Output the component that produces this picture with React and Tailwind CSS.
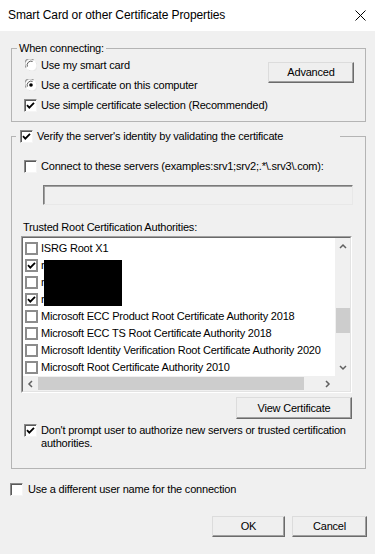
const items = [
  { label: 'ISRG Root X1', checked: false },
  { label: 'r', checked: true },
  { label: 'r', checked: false },
  { label: 'r', checked: true },
  { label: 'Microsoft ECC Product Root Certificate Authority 2018', checked: false },
  { label: 'Microsoft ECC TS Root Certificate Authority 2018', checked: false },
  { label: 'Microsoft Identity Verification Root Certificate Authority 2020', checked: false },
  { label: 'Microsoft Root Certificate Authority 2010', checked: false },
]

function Radio({ checked }) {
  return (
    <svg width="12" height="12" viewBox="0 0 12 12" className="shrink-0">
      <circle cx="6" cy="6" r="5.5" fill="#fff" />
      <path d="M1.2 8.5 A5 5 0 0 1 8.5 1.2" fill="none" stroke="#9a9a9a" strokeWidth="1.2" />
      <path d="M2.4 7.6 A4 4 0 0 1 7.6 2.4" fill="none" stroke="#5a5a5a" strokeWidth="1" />
      <path d="M10.8 3.5 A5 5 0 0 1 3.5 10.8" fill="none" stroke="#e6e6e6" strokeWidth="1" />
      {checked && <circle cx="6" cy="6" r="1.8" fill="#000" />}
    </svg>
  )
}

function Tick() {
  return (
    <svg width="9" height="9" viewBox="0 0 9 9" className="block">
      <path d="M1 4.2 L3.3 6.6 L8 1.8" fill="none" stroke="#000" strokeWidth="1.8" />
    </svg>
  )
}

function Check({ checked }) {
  return (
    <div className="w-[13px] h-[13px] shrink-0 bg-white border border-t-[#8a8a8a] border-l-[#8a8a8a] border-b-[#f5f5f5] border-r-[#f5f5f5] shadow-[inset_1px_1px_0_#5a5a5a] flex items-center justify-center">
      {checked && <Tick />}
    </div>
  )
}

function ListCheck({ checked }) {
  return (
    <div className="w-[13px] h-[13px] shrink-0 bg-white border-2 border-[#8c8c8c] flex items-center justify-center">
      {checked && <Tick />}
    </div>
  )
}

function Btn({ children, className }) {
  return (
    <button className={`h-[21px] bg-[#efefef] border border-t-[#dcdcdc] border-l-[#dcdcdc] border-b-[#6b6b6b] border-r-[#6b6b6b] shadow-[inset_-1px_-1px_0_#a0a0a0] flex items-center justify-center shrink-0 ${className}`}>
      {children}
    </button>
  )
}

function Chevron({ dir }) {
  const paths = {
    up: 'M1 5 L4 2 L7 5',
    down: 'M1 2 L4 5 L7 2',
    left: 'M5 1 L2 4 L5 7',
    right: 'M2 1 L5 4 L2 7',
  }
  return (
    <svg width="8" height="8" viewBox="0 0 8 8">
      <path d={paths[dir]} fill="none" stroke="#606060" strokeWidth="1.5" />
    </svg>
  )
}

export default function App() {
  return (
    <div className="w-[375px] h-[554px] bg-[#f0f0f0] text-black text-[11px] leading-[13px] tracking-[-0.2px] font-['Liberation_Sans',Arial,sans-serif] overflow-hidden">
      {/* Title bar */}
      <div className="h-[31px] bg-white flex items-center justify-between pl-[8px] pr-[9px]">
        <span className="text-[12px] tracking-[-0.1px]">Smart Card or other Certificate Properties</span>
        <svg width="11" height="11" viewBox="0 0 11 11">
          <path d="M0.5 0.5 L10.5 10.5 M10.5 0.5 L0.5 10.5" stroke="#000" strokeWidth="1" />
        </svg>
      </div>

      <div className="pl-[11px] pr-[9px]">
        {/* When connecting */}
        <fieldset className="mt-[10px] border border-[#b4b4b4]">
          <legend className="ml-[5px] px-[2px] leading-[14px]">When connecting:</legend>
          <div className="flex justify-between pl-[13px] pr-[11px] pb-[6px]">
            <div>
              <div className="h-[20px] flex items-center gap-[4px]">
                <Radio />
                <span>Use my smart card</span>
              </div>
              <div className="h-[20px] flex items-center gap-[4px]">
                <Radio checked />
                <span>Use a certificate on this computer</span>
              </div>
              <div className="h-[20px] flex items-center gap-[3px] -ml-[1px]">
                <Check checked />
                <span className="ml-[1px]">Use simple certificate selection (Recommended)</span>
              </div>
            </div>
            <Btn className="mt-[7px] w-[86px]">Advanced</Btn>
          </div>
        </fieldset>

        {/* Verify server */}
        <fieldset className="mt-[7px] border border-[#b4b4b4] pb-[18px]">
          <legend className="ml-[4px] w-[324px] pl-[4px] h-[14px] flex items-center gap-[4px]">
            <Check checked />
            <span>Verify the server's identity by validating the certificate</span>
          </legend>

          <div className="mt-[15px] ml-[12px] h-[16px] flex items-center gap-[4px]">
            <Check />
            <span>Connect to these servers (examples:srv1;srv2;.*\.srv3\.com):</span>
          </div>

          <div className="mt-[11px] ml-[31px] w-[310px] h-[20px] bg-[#f0f0f0] border border-t-[#7a7a7a] border-l-[#7a7a7a] border-b-[#e8e8e8] border-r-[#e8e8e8] shadow-[inset_1px_1px_0_#a0a0a0]" />

          <div className="mt-[15px] ml-[11px] h-[14px] leading-[14px]">Trusted Root Certification Authorities:</div>

          {/* List */}
          <div className="mt-[2px] ml-[9px] w-[331px] h-[157px] border border-t-[#a0a0a0] border-l-[#a0a0a0] border-b-[#ffffff] border-r-[#ffffff]">
            <div className="w-full h-full border border-t-[#696969] border-l-[#696969] border-b-[#e3e3e3] border-r-[#e3e3e3] flex flex-col bg-white">
              <div className="flex h-[138px]">
                <div className="relative flex-1 pt-[2px] overflow-hidden">
                  {items.map((it, i) => (
                    <div key={i} className="h-[17px] flex items-center gap-[3px] pl-[2px] whitespace-nowrap">
                      <ListCheck checked={it.checked} />
                      <span>{it.label}</span>
                    </div>
                  ))}
                  <div className="absolute left-[21px] top-[22px] w-[78px] h-[46px] bg-black" />
                </div>
                <div className="w-[15px] bg-[#f0f0f0] flex flex-col">
                  <div className="h-[17px] flex items-center justify-center"><Chevron dir="up" /></div>
                  <div className="flex-1 relative">
                    <div className="absolute left-[1px] right-[0px] top-[53px] h-[25px] bg-[#cdcdcd]" />
                  </div>
                  <div className="h-[17px] flex items-center justify-center"><Chevron dir="down" /></div>
                </div>
              </div>
              <div className="flex h-[15px] bg-[#f0f0f0]">
                <div className="w-[15px] flex items-center justify-center"><Chevron dir="left" /></div>
                <div className="w-[266px] bg-[#cdcdcd] my-[1px]" />
                <div className="flex-1" />
                <div className="w-[15px] flex items-center justify-center"><Chevron dir="right" /></div>
                <div className="w-[15px]" />
              </div>
            </div>
          </div>

          <Btn className="mt-[4px] ml-[224px] w-[116px] h-[22px]">View Certificate</Btn>

          <div className="mt-[5px] ml-[12px] flex items-start gap-[4px]">
            <div className="mt-[0px]"><Check checked /></div>
            <span className="w-[310px]">Don't prompt user to authorize new servers or trusted certification authorities.</span>
          </div>
        </fieldset>

        <div className="mt-[12px] -ml-[1px] h-[16px] flex items-center gap-[5px]">
          <Check />
          <span>Use a different user name for the connection</span>
        </div>

        <div className="mt-[19px] flex justify-end gap-[7px] -mr-[1px]">
          <Btn className="w-[73px]">OK</Btn>
          <Btn className="w-[75px]">Cancel</Btn>
        </div>
      </div>
    </div>
  )
}
